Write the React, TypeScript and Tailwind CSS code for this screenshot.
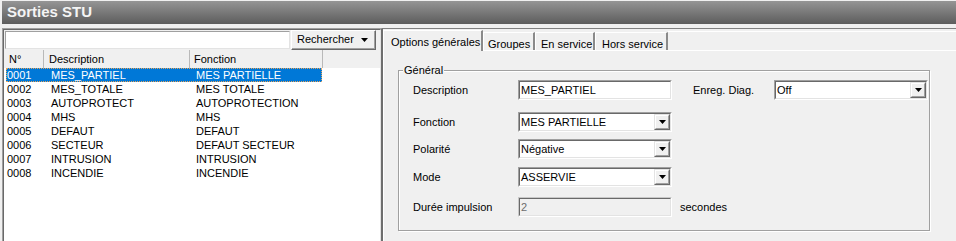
import React from "react";

const rows = [
  ["0001", "MES_PARTIEL", "MES PARTIELLE"],
  ["0002", "MES_TOTALE", "MES TOTALE"],
  ["0003", "AUTOPROTECT", "AUTOPROTECTION"],
  ["0004", "MHS", "MHS"],
  ["0005", "DEFAUT", "DEFAUT"],
  ["0006", "SECTEUR", "DEFAUT SECTEUR"],
  ["0007", "INTRUSION", "INTRUSION"],
  ["0008", "INCENDIE", "INCENDIE"],
];

function Arrow() {
  return (
    <svg width="7" height="4" viewBox="0 0 7 4">
      <path d="M0 0H7L3.5 4Z" fill="#000" />
    </svg>
  );
}

function Sunken({
  children,
  className = "",
  disabled = false,
}: {
  children?: React.ReactNode;
  className?: string;
  disabled?: boolean;
}) {
  return (
    <div
      className={
        "flex h-[20px] border border-t-[#a0a0a0] border-l-[#a0a0a0] border-r-white border-b-white " +
        className
      }
    >
      <div
        className={
          "flex flex-1 items-center border border-t-[#696969] border-l-[#696969] border-r-[#e3e3e3] border-b-[#e3e3e3] " +
          (disabled ? "bg-[#f0f0f0]" : "bg-white")
        }
      >
        {children}
      </div>
    </div>
  );
}

function DropBtn() {
  return (
    <div className="flex h-full w-[16px] border border-t-[#e3e3e3] border-l-[#e3e3e3] border-r-[#696969] border-b-[#696969]">
      <div className="flex flex-1 items-center justify-center border border-t-white border-l-white border-r-[#a0a0a0] border-b-[#a0a0a0] bg-[#f0f0f0]">
        <Arrow />
      </div>
    </div>
  );
}

function Combo({ value, w }: { value: string; w: string }) {
  return (
    <Sunken className={w}>
      <span className="flex-1 pl-[1px] leading-none">{value}</span>
      <DropBtn />
    </Sunken>
  );
}

export default function App() {
  return (
    <div className="flex h-[241px] w-[956px] flex-col overflow-hidden bg-[#f0f0f0] font-['Liberation_Sans',Arial,sans-serif] text-[11px] text-black">
      {/* Title bar */}
      <div className="ml-[2px] mt-[1px] flex h-[23px] shrink-0 items-center bg-gradient-to-b from-[#959595] to-[#5d5d5d] pl-[5px] text-[15px] font-bold text-[#f4f4f4]">
        Sorties STU
      </div>

      <div className="mt-[4px] flex flex-1">
        {/* Left panel */}
        <div className="ml-[2px] flex w-[381px] border-t border-l border-r-2 border-t-[#a0a0a0] border-l-[#a0a0a0] border-r-[#6e6e6e]">
          <div className="flex flex-1 flex-col border-t border-l border-r border-t-[#696969] border-l-[#696969] border-r-[#e3e3e3]">
            {/* search row */}
            <div className="flex h-[20px] shrink-0 items-start">
              <div className="ml-[1px] mt-[1px] h-[18px] w-[285px] border border-t-[#a0a0a0] border-l-[#a0a0a0] border-r-[#e3e3e3] border-b-[#e3e3e3] bg-white" />
              <div className="ml-[1px] flex h-[20px] w-[85px] border border-t-white border-l-white border-r-[#696969] border-b-[#696969]">
                <div className="flex flex-1 items-center border-r border-b border-r-[#a0a0a0] border-b-[#a0a0a0] bg-[#f0f0f0] pl-[5px]">
                  <span className="flex-1">Rechercher</span>
                  <span className="mr-[6px] flex">
                    <Arrow />
                  </span>
                </div>
              </div>
            </div>
            {/* header */}
            <div className="flex h-[18px] shrink-0 items-center bg-[#f0f0f0]">
              <div className="flex h-full w-[40px] items-center border-r border-r-[#b9b9b9] pl-[5px]">N°</div>
              <div className="flex h-full w-[146px] items-center border-r border-r-[#b9b9b9] pl-[5px]">Description</div>
              <div className="flex h-full w-[133px] items-center border-r border-r-[#b9b9b9] pl-[4px]">Fonction</div>
              <div className="flex-1" />
            </div>
            {/* list */}
            <div className="flex flex-1 flex-col bg-white">
              {rows.map((r, i) => (
                <div
                  key={r[0]}
                  className={
                    "ml-[2px] flex h-[14px] w-[316px] items-center " +
                    (i === 0
                      ? "border border-dotted border-[#e8a45a] bg-[#0078d7] text-white"
                      : "border border-transparent")
                  }
                >
                  <span className="w-[44px] pl-[0px]">{r[0]}</span>
                  <span className="w-[145px]">{r[1]}</span>
                  <span className="flex-1">{r[2]}</span>
                </div>
              ))}
            </div>
          </div>
        </div>

        {/* Right panel */}
        <div className="flex flex-1 flex-col border-t border-t-[#808080] pt-[1px]">
          {/* tabs */}
          <div className="flex h-[20px] shrink-0 items-end">
            <div className="relative z-10 -mb-[1px] flex h-[21px] w-[100px] items-start border-t border-l border-r-2 border-t-white border-l-white border-r-[#8a8a8a] bg-[#f0f0f0] pl-[7px] pt-[3px]">
              Options générales
            </div>
            <div className="flex h-[18px] w-[52px] items-start border-t border-l border-r-2 border-t-white border-l-white border-r-[#8a8a8a] pl-[4px] pt-[3px]">
              Groupes
            </div>
            <div className="flex h-[18px] w-[60px] items-start border-t border-l border-r-2 border-t-white border-l-white border-r-[#8a8a8a] pl-[5px] pt-[3px]">
              En service
            </div>
            <div className="flex h-[18px] w-[73px] items-start border-t border-l border-r-2 border-t-white border-l-white border-r-[#8a8a8a] pl-[6px] pt-[3px]">
              Hors service
            </div>
            <div className="mb-auto mt-[1px] h-[1px] flex-1 bg-white" />
          </div>
          {/* tab page */}
          <div className="flex-1 border-t border-l border-t-white border-l-white pl-[14px] pt-[19px]">
            <div className="relative h-[161px] w-[532px] border border-[#a0a0a0] shadow-[inset_1px_1px_0_#ffffff,1px_1px_0_#ffffff]">
              <span className="absolute -top-[8px] left-[4px] bg-[#f0f0f0] px-[1px] leading-[14px]">Général</span>
              <div className="flex flex-col pl-[14px] pt-[9px]">
                <div className="flex h-[20px] items-center">
                  <span className="w-[105px]">Description</span>
                  <Sunken className="w-[154px]">
                    <span className="pl-[1px]">MES_PARTIEL</span>
                  </Sunken>
                  <span className="ml-[21px] w-[81px]">Enreg. Diag.</span>
                  <Combo value="Off" w="w-[154px]" />
                </div>
                <div className="mt-[12px] flex h-[20px] items-center">
                  <span className="w-[105px]">Fonction</span>
                  <Combo value="MES PARTIELLE" w="w-[154px]" />
                </div>
                <div className="mt-[7px] flex h-[20px] items-center">
                  <span className="w-[105px]">Polarité</span>
                  <Combo value="Négative" w="w-[154px]" />
                </div>
                <div className="mt-[8px] flex h-[20px] items-center">
                  <span className="w-[105px]">Mode</span>
                  <Combo value="ASSERVIE" w="w-[154px]" />
                </div>
                <div className="mt-[10px] flex h-[20px] items-center">
                  <span className="w-[105px]">Durée impulsion</span>
                  <Sunken className="w-[154px] !border-t-[#c8c8c8] !border-l-[#c8c8c8]" disabled>
                    <span className="pl-[1px] text-[#6d6d6d]">2</span>
                  </Sunken>
                  <span className="ml-[8px]">secondes</span>
                </div>
              </div>
            </div>
          </div>
        </div>
      </div>
    </div>
  );
}
